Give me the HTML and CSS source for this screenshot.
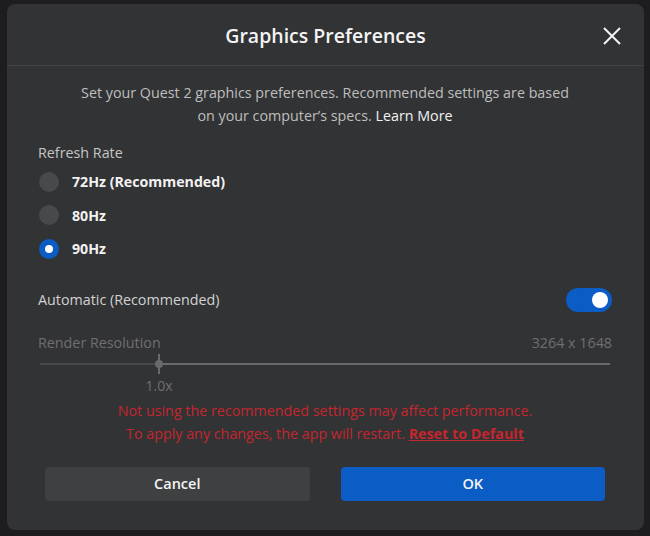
FILE: index.html
```html
<!DOCTYPE html>
<html>
<head>
<meta charset="utf-8">
<link rel="stylesheet" href="styles.css">
</head>
<body>
<div class="dialog">
  <div class="header">
    <span></span>
    <h1 class="title">Graphics Preferences</h1>
    <button class="close" aria-label="Close">
      <svg width="20" height="20" viewBox="0 0 20 20"><path d="M2 2 L18 18 M18 2 L2 18" stroke="#f2f2f2" stroke-width="2" fill="none"/></svg>
    </button>
  </div>
  <p class="desc">Set your Quest 2 graphics preferences. Recommended settings are based<br>on your computer’s specs. <a class="learn">Learn More</a></p>
  <div class="section-label">Refresh Rate</div>
  <div class="radios">
    <label class="radio"><span class="dot"></span><span class="rlabel">72Hz (Recommended)</span></label>
    <label class="radio"><span class="dot"></span><span class="rlabel">80Hz</span></label>
    <label class="radio"><span class="dot on"></span><span class="rlabel">90Hz</span></label>
  </div>
  <div class="auto-row">
    <span class="auto-label">Automatic (Recommended)</span>
    <span class="toggle"><span class="knob"></span></span>
  </div>
  <div class="res-row">
    <span>Render Resolution</span>
    <span>3264 x 1648</span>
  </div>
  <div class="slider">
    <div class="track-left" style="width:119px"></div>
    <div class="track-right"></div>
    <div class="thumb" style="left:119px"></div>
  </div>
  <div class="scale"><span class="scale-val" style="left:119px">1.0x</span></div>
  <p class="warn">Not using the recommended settings may affect performance.<br>To apply any changes, the app will restart. <a class="reset">Reset to Default</a></p>
  <div class="buttons">
    <button class="btn cancel">Cancel</button>
    <button class="btn ok">OK</button>
  </div>
</div>
</body>
</html>
```
FILE: styles.css
```css
* { box-sizing: border-box; }
html, body { margin: 0; padding: 0; }
body {
  background: #1d1d1f;
  width: 650px;
  height: 536px;
  overflow: hidden;
  font-family: "Open Sans", "Noto Sans", sans-serif;
}
.dialog {
  margin: 4px 6px 0 7px;
  width: 637px;
  height: 526px;
  background: #323335;
  border-radius: 8px;
  padding: 0 32px 0 31px;
  display: flex;
  flex-direction: column;
}
.header {
  height: 62px;
  margin: 0 -32px 0 -31px;
  border-bottom: 1px solid #424345;
  display: grid;
  grid-template-columns: 1fr auto 1fr;
  align-items: center;
}
.title {
  margin: 0;
  font-size: 19.5px;
  font-weight: 600;
  color: #f4f4f4;
  padding-top: 2px;
}
.close {
  justify-self: end;
  margin-right: 22px;
  margin-top: 2px;
  background: none;
  border: 0;
  padding: 0;
  width: 20px;
  height: 20px;
  display: block;
}
.close svg { display: block; }
.desc {
  margin: 15px 0 0;
  text-align: center;
  font-size: 14.3px;
  line-height: 23px;
  color: #bebebe;
}
.learn { color: #f2f2f2; }
.section-label {
  margin-top: 15px;
  font-size: 14.3px;
  line-height: 22px;
  color: #c6c6c6;
}
.radios {
  margin-top: 1px;
  display: flex;
  flex-direction: column;
}
.radio {
  height: 33.5px;
  display: flex;
  align-items: center;
}
.dot {
  width: 20px;
  height: 20px;
  border-radius: 50%;
  background: #48494b;
  margin-left: 1px;
  margin-right: 13px;
  flex: none;
}
.dot.on {
  background: #ffffff;
  border: 6px solid #0b5cc4;
}
.rlabel {
  font-size: 14.2px;
  font-weight: 700;
  color: #f2f2f2;
}
.auto-row {
  margin-top: 22px;
  height: 24px;
  display: flex;
  align-items: center;
  justify-content: space-between;
}
.auto-label {
  font-size: 14.3px;
  color: #d2d2d2;
}
.toggle {
  width: 46px;
  height: 24px;
  border-radius: 12px;
  background: #0b5cc4;
  display: flex;
  align-items: center;
  justify-content: flex-end;
  padding-right: 4px;
}
.knob {
  width: 16px;
  height: 16px;
  border-radius: 50%;
  background: #ffffff;
}
.res-row {
  margin-top: 21px;
  height: 20px;
  display: flex;
  justify-content: space-between;
  align-items: center;
  font-size: 14.3px;
  color: #6f6f71;
}
.slider {
  position: relative;
  height: 20px;
  margin-top: 1px;
  margin-left: 2px;
  margin-right: 2px;
  display: flex;
  align-items: center;
}
.track-left { height: 2px; background: #48494b; flex: none; }
.track-right { height: 2px; background: #6a6a6c; flex: 1; }
.thumb {
  position: absolute;
  top: 0;
  width: 2px;
  height: 20px;
  margin-left: -1px;
  background: #6a6a6c;
}
.thumb::after {
  content: "";
  position: absolute;
  left: -3px;
  top: 6px;
  width: 8px;
  height: 8px;
  border-radius: 50%;
  background: #6a6a6c;
}
.scale {
  position: relative;
  height: 20px;
  margin-top: 2px;
  margin-left: 2px;
}
.scale-val {
  position: absolute;
  top: 0;
  transform: translateX(-50%);
  font-size: 14px;
  line-height: 20px;
  color: #6f6f71;
}
.warn {
  margin: 3px 0 0;
  text-align: center;
  font-size: 14.3px;
  line-height: 23px;
  color: #c4262e;
}
.reset {
  font-weight: 700;
  text-decoration: underline;
}
.buttons {
  margin: 22px 7px 0 7px;
  display: flex;
  gap: 31px;
}
.btn {
  flex: 1;
  height: 34px;
  border: 0;
  border-radius: 4px;
  font-family: inherit;
  font-size: 14.5px;
  font-weight: 600;
  color: #f4f4f4;
}
.cancel { background: #3f4042; }
.ok { background: #0b5cc4; }
```
